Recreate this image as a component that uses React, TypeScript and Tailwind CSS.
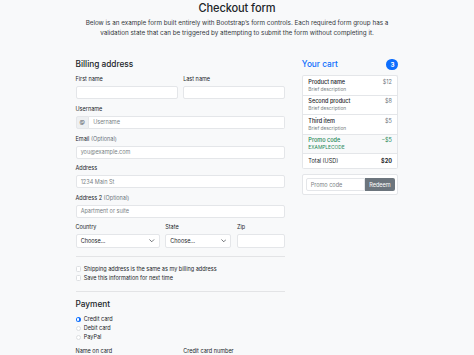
import React from "react";

const Label = ({ children, optional }: { children: React.ReactNode; optional?: boolean }) => (
  <div className="text-[5.52px] leading-[8.28px] mb-[2.76px]">
    {children}
    {optional && <span className="text-[#6c757d]"> (Optional)</span>}
  </div>
);

const Input = ({ placeholder }: { placeholder?: string }) => (
  <div className="h-[13.1px] w-full border border-[#e4e6e9] rounded-[2px] bg-white px-[4.14px] flex items-center text-[5.52px] text-[#7a7f85]">
    {placeholder}
  </div>
);

const Chevron = () => (
  <svg viewBox="0 0 16 16" className="w-[5.52px] h-[5.52px]" fill="none" stroke="#343a40" strokeWidth="2" strokeLinecap="round" strokeLinejoin="round">
    <path d="m2 5 6 6 6-6" />
  </svg>
);

const Select = () => (
  <div className="h-[13.1px] w-full border border-[#e4e6e9] rounded-[2px] bg-white pl-[4.14px] pr-[4.14px] flex items-center justify-between text-[5.52px] text-[#212529]">
    <span>Choose...</span>
    <Chevron />
  </div>
);

const Check = ({ children }: { children: React.ReactNode }) => (
  <div className="flex items-center h-[8.28px] mb-[0.69px] text-[5.52px] leading-[8.28px]">
    <span className="w-[5.52px] h-[5.52px] border border-[#dcdfe2] rounded-[1.4px] bg-white shrink-0" />
    <span className="ml-[2.76px]">{children}</span>
  </div>
);

const Radio = ({ children, checked }: { children: React.ReactNode; checked?: boolean }) => (
  <div className="flex items-center h-[8.28px] mb-[0.69px] text-[5.52px] leading-[8.28px]">
    {checked ? (
      <span className="w-[5.52px] h-[5.52px] rounded-full bg-[#0d6efd] shrink-0 flex items-center justify-center">
        <span className="w-[2.4px] h-[2.4px] rounded-full bg-white" />
      </span>
    ) : (
      <span className="w-[5.52px] h-[5.52px] border border-[#dcdfe2] rounded-full bg-white shrink-0" />
    )}
    <span className="ml-[2.76px]">{children}</span>
  </div>
);

const Item = ({ title, desc, price, success }: { title: string; desc: string; price: string; success?: boolean }) => (
  <div className={`flex justify-between px-[5.52px] py-[2.76px] border-b border-[#e4e6e9] leading-[1.25] ${success ? "bg-[#f8f9fa] text-[#198754]" : ""}`}>
    <div>
      <div className="text-[5.52px] font-medium leading-[6.9px]">{title}</div>
      <div className={`text-[4.83px] leading-[6.04px] ${success ? "" : "text-[#7a7f85]"}`}>{desc}</div>
    </div>
    <span className={`text-[5.52px] leading-[6.9px] ${success ? "" : "text-[#6c757d]"}`}>{price}</span>
  </div>
);

export default function App() {
  return (
    <div className="w-[474px] h-[355px] overflow-hidden bg-[#f8f9fa] text-[#212529] font-['Inter',sans-serif]">
      <div className="w-[323px] mx-auto">
        <div className="flex flex-col items-center pt-[2px] pb-[15.6px]">
          <h2 className="text-[11.04px] leading-[13.25px] font-medium mb-[2.76px] tracking-[-0.1px]">Checkout form</h2>
          <p className="text-[6.3px] leading-[10.35px] mb-[5.52px] text-[#33373b] whitespace-nowrap text-center">
            Below is an example form built entirely with Bootstrap’s form controls. Each required form group has a
            <br />
            validation state that can be triggered by attempting to submit the form without completing it.
          </p>
        </div>
        <div className="flex gap-[16.56px]">
          <div className="w-[209.8px]">
            <h4 className="text-[8.28px] leading-[9.94px] font-medium mb-[5.52px]">Billing address</h4>
            <div className="grid grid-cols-12 gap-x-[5.52px] gap-y-[5.52px]">
              <div className="col-span-6">
                <Label>First name</Label>
                <Input />
              </div>
              <div className="col-span-6">
                <Label>Last name</Label>
                <Input />
              </div>
              <div className="col-span-12">
                <Label>Username</Label>
                <div className="flex h-[13.1px]">
                  <div className="w-[13.5px] border border-[#e4e6e9] rounded-l-[2px] bg-[#eef0f2] flex items-center justify-center text-[5.52px] text-[#495057]">@</div>
                  <div className="flex-1 border border-l-0 border-[#e4e6e9] rounded-r-[2px] bg-white px-[4.14px] flex items-center text-[5.52px] text-[#7a7f85]">Username</div>
                </div>
              </div>
              <div className="col-span-12">
                <Label optional>Email</Label>
                <Input placeholder="you@example.com" />
              </div>
              <div className="col-span-12">
                <Label>Address</Label>
                <Input placeholder="1234 Main St" />
              </div>
              <div className="col-span-12">
                <Label optional>Address 2</Label>
                <Input placeholder="Apartment or suite" />
              </div>
              <div className="col-span-5">
                <Label>Country</Label>
                <Select />
              </div>
              <div className="col-span-4">
                <Label>State</Label>
                <Select />
              </div>
              <div className="col-span-3">
                <Label>Zip</Label>
                <Input />
              </div>
            </div>
            <div className="my-[8.28px] h-px bg-[#e3e4e6]" />
            <Check>Shipping address is the same as my billing address</Check>
            <Check>Save this information for next time</Check>
            <div className="my-[8.28px] h-px bg-[#e3e4e6]" />
            <h4 className="text-[8.28px] leading-[9.94px] font-medium mb-[5.52px]">Payment</h4>
            <div className="mb-[5.52px]">
              <Radio checked>Credit card</Radio>
              <Radio>Debit card</Radio>
              <Radio>PayPal</Radio>
            </div>
            <div className="grid grid-cols-2 gap-x-[5.52px]">
              <div>
                <Label>Name on card</Label>
                <Input />
              </div>
              <div>
                <Label>Credit card number</Label>
                <Input />
              </div>
            </div>
          </div>
          <div className="w-[96.6px]">
            <div className="flex justify-between items-center mb-[5.52px] h-[9.94px]">
              <span className="text-[8.28px] leading-[9.94px] font-medium text-[#0d6efd]">Your cart</span>
              <span className="rounded-full bg-[#0d6efd] text-white text-[6.2px] font-bold leading-none px-[4px] py-[2.2px]">3</span>
            </div>
            <div className="border border-[#e4e6e9] border-b-0 rounded-[2px] bg-white mb-[5.52px] overflow-hidden">
              <Item title="Product name" desc="Brief description" price="$12" />
              <Item title="Second product" desc="Brief description" price="$8" />
              <Item title="Third item" desc="Brief description" price="$5" />
              <Item title="Promo code" desc="EXAMPLECODE" price="−$5" success />
              <div className="flex justify-between px-[5.52px] py-[2.76px] border-b border-[#e4e6e9] text-[5.52px] leading-[8.28px]">
                <span>Total (USD)</span>
                <strong className="font-bold">$20</strong>
              </div>
            </div>
            <div className="border border-[#e4e6e9] rounded-[2px] bg-white p-[2.76px] flex">
              <div className="flex-1 h-[13.1px] border border-[#e4e6e9] rounded-l-[2px] px-[4.14px] flex items-center text-[5.52px] text-[#7a7f85]">Promo code</div>
              <div className="h-[13.1px] bg-[#6c757d] text-white rounded-r-[2px] px-[4.14px] flex items-center text-[5.52px]">Redeem</div>
            </div>
          </div>
        </div>
      </div>
    </div>
  );
}
